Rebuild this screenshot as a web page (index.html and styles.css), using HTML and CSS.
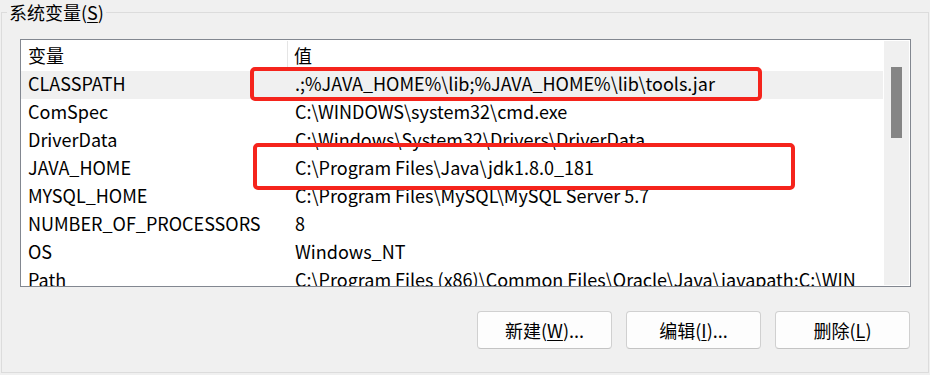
FILE: index.html
```html
<!DOCTYPE html>
<html lang="zh-CN">
<head>
<meta charset="utf-8">
<title>系统变量</title>
<link rel="stylesheet" href="styles.css">
</head>
<body>
<div class="group">
  <div class="title">系统变量(<u>S</u>)</div>
  <div class="list">
    <div class="content">
      <div class="head">
        <div class="hcell c1">变量</div>
        <div class="sep"></div>
        <div class="hcell c2">值</div>
      </div>
      <div class="row sel"><div class="cell c1">CLASSPATH</div><div class="cell c2">.;%JAVA_HOME%\lib;%JAVA_HOME%\lib\tools.jar</div></div>
      <div class="row"><div class="cell c1">ComSpec</div><div class="cell c2">C:\WINDOWS\system32\cmd.exe</div></div>
      <div class="row"><div class="cell c1">DriverData</div><div class="cell c2">C:\Windows\System32\Drivers\DriverData</div></div>
      <div class="row"><div class="cell c1">JAVA_HOME</div><div class="cell c2">C:\Program Files\Java\jdk1.8.0_181</div></div>
      <div class="row"><div class="cell c1">MYSQL_HOME</div><div class="cell c2">C:\Program Files\MySQL\MySQL Server 5.7</div></div>
      <div class="row"><div class="cell c1">NUMBER_OF_PROCESSORS</div><div class="cell c2">8</div></div>
      <div class="row"><div class="cell c1">OS</div><div class="cell c2">Windows_NT</div></div>
      <div class="row"><div class="cell c1">Path</div><div class="cell c2">C:\Program Files (x86)\Common Files\Oracle\Java\javapath;C:\WIN</div></div>
    </div>
    <div class="scroll"><div class="track"><div class="thumb"></div></div></div>
  </div>
  <div class="buttons">
    <button class="btn">新建(<u>W</u>)...</button>
    <button class="btn">编辑(<u>I</u>)...</button>
    <button class="btn">删除(<u>L</u>)</button>
  </div>
</div>
<div class="mark mark1"></div>
<div class="mark mark2"></div>
</body>
</html>
```
FILE: styles.css
```css
* { box-sizing: border-box; }
html, body { margin: 0; padding: 0; }
body {
  width: 930px;
  height: 375px;
  overflow: hidden;
  position: relative;
  background: #f0f0f0;
  color: #000;
  font-family: "Noto Sans CJK SC", "Noto Sans", sans-serif;
}
.group {
  margin: 12px 0 0 1px;
  width: 928px;
  height: 361px;
  border: 1px solid #dcdcdc;
  padding: 0 17px 0 18px;
}
.title {
  width: max-content;
  margin: -12px 0 0 -13px;
  padding: 0 2px;
  height: 22px;
  line-height: 22px;
  font-size: 18px;
  background: #f0f0f0;
  white-space: nowrap;
}
.title u, .btn u { text-underline-offset: 2px; text-decoration-thickness: 1px; }
.list {
  margin-top: 16px;
  height: 248px;
  border: 1px solid #828790;
  background: #fff;
  display: flex;
}
.content {
  flex: 1;
  min-width: 0;
  overflow: hidden;
}
.head {
  display: flex;
  height: 31px;
  font-size: 18px;
  line-height: 31px;
}
.hcell.c1 { width: 266px; padding-left: 7px; }
.sep { width: 1px; height: 26px; margin-top: 1px; background: #e5e5e5; }
.hcell.c2 { padding-left: 6px; }
.row {
  display: flex;
  align-items: flex-start;
  height: 28px;
  font-size: 18px;
}
.row.sel { background: #f0f0f0; }
.cell {
  line-height: 24px;
  white-space: nowrap;
}
.cell.c1 { width: 267px; padding-left: 7px; flex: none; }
.cell.c2 { padding-left: 7px; flex: 1; }
.scroll {
  width: 27px;
  padding: 1px;
  background: #fff;
  flex: none;
}
.track {
  height: 100%;
  background: #f0f0f0;
  padding: 26px 0 0 7px;
}
.thumb {
  width: 11px;
  height: 71px;
  background: #858585;
}
.buttons {
  margin-top: 24px;
  display: flex;
  justify-content: flex-end;
  gap: 14px;
  padding-right: 1px;
}
.btn {
  width: 135px;
  height: 38px;
  padding: 0;
  border: 1px solid #d0d0d0;
  border-bottom-color: #c4c4c4;
  border-radius: 4px;
  background: #fdfdfd;
  color: #000;
  font-family: inherit;
  font-size: 18px;
  line-height: 1;
}
.mark {
  position: absolute;
  border: 4px solid #f5241c;
  border-radius: 5px;
}
.mark1 { left: 250px; top: 67px; width: 512px; height: 34px; }
.mark2 { left: 253px; top: 143px; width: 542px; height: 47px; }
```
